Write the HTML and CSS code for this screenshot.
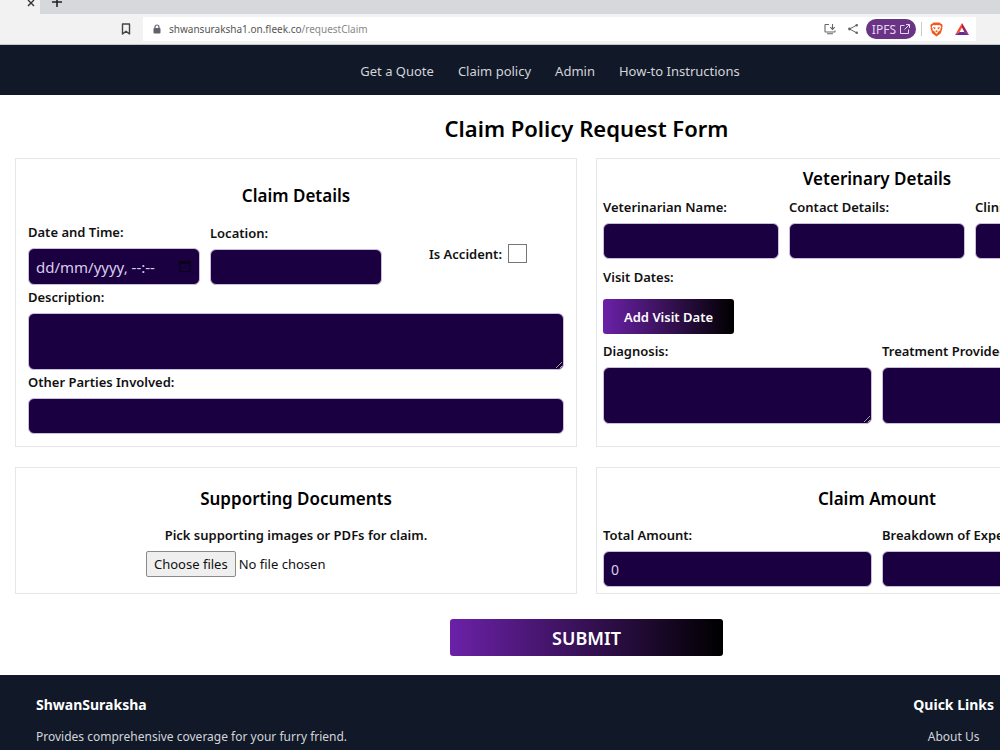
FILE: index.html
```html
<!DOCTYPE html>
<html lang="en">
<head>
    <meta charset="UTF-8">
    <meta name="viewport" content="width=device-width, initial-scale=1.0">
    <title>Claim Policy Request Form</title>
    <link rel="stylesheet" href="styles.css">
</head>
<body>
    <div class="tab-strip">
        <div class="tab">
            <button class="tab-btn" aria-label="Close tab">
                <svg width="8" height="8" viewBox="0 0 8 8"><path d="M1 0l6 6M7 0l-6 6" stroke="#333" stroke-width="1.4"/></svg>
            </button>
        </div>
        <button class="tab-btn new-tab" aria-label="New tab">
            <svg width="10" height="10" viewBox="0 0 10 10"><path d="M5 0v10M0 5h10" stroke="#222" stroke-width="1.6"/></svg>
        </button>
    </div>
    <div class="toolbar">
        <button class="icon-btn bookmark" aria-label="Bookmark">
            <svg width="10" height="12" viewBox="0 0 10 12"><path d="M1.5 1h7v10L5 8.2 1.5 11z" fill="none" stroke="#444" stroke-width="1.4" stroke-linejoin="round"/></svg>
        </button>
        <div class="address">
            <svg width="8" height="10" viewBox="0 0 8 10"><path d="M2 4.5V3a2 2 0 0 1 4 0v1.5" fill="none" stroke="#5f6368" stroke-width="1.2"/><rect x="0.5" y="4" width="7" height="5.5" rx="1" fill="#5f6368"/></svg>
            <span class="url">shwansuraksha1.on.fleek.co<span class="url-path">/requestClaim</span></span>
            <button class="icon-btn" aria-label="Install app">
                <svg width="12" height="12" viewBox="0 0 12 12" fill="none" stroke="#666" stroke-width="1.1"><path d="M5 1.500H1.500a.5.5 0 0 0-.5.5v6.500a.5.5 0 0 0 .5.5h9a.5.5 0 0 0 .5-.5V7.500M3 10.800h6M8.500 1v5M6.300 4.200l2.200 2.200 2.200-2.200"/></svg>
            </button>
            <button class="icon-btn" aria-label="Share">
                <svg width="10" height="12" viewBox="0 0 10 12"><path d="M9 2L1.5 6 9 10" fill="none" stroke="#666"/><circle cx="8.7" cy="2.2" r="1.3" fill="#666"/><circle cx="1.5" cy="6" r="1.4" fill="#666"/><circle cx="8.7" cy="9.8" r="1.3" fill="#666"/></svg>
            </button>
            <button class="ipfs">IPFS
                <svg width="10" height="10" viewBox="0 0 10 10" fill="none" stroke="#e6d6f2"><path d="M4.5 1.5H.5v8h8v-4M6 .5h3.5V4M9.5.5L4.5 5.5"/></svg>
            </button>
            <span class="divider"></span>
            <button class="icon-btn" aria-label="Shields">
                <svg width="13" height="15" viewBox="0 0 13 15"><path d="M3.500.5h6l1.300 1.300 1.200.2.700 2-.5 1.200.2 1-1.500 5L6.500 14.500 2.100 11.200.600 6.200l.2-1L.300 4 1 2l1.200-.2z" fill="#f1591f"/><path d="M3 3l2 .3 1.500-.4 1.500.4 2-.3 1.300 2-1 1.800.2 1.200-1.800 1.200L6.500 12 4.300 9.200 2.500 8l.2-1.200-1-1.800z" fill="#fff"/><path d="M3 5l2.300.6.2 1-1.200.9zM10 5l-2.300.6-.2 1 1.200.9zM5 9l1.500-.8L8 9l-1.500 1.300z" fill="#f1591f"/></svg>
            </button>
            <button class="icon-btn" aria-label="Rewards">
                <svg width="14" height="12" viewBox="0 0 14 12"><path d="M7 0L0 12l4.500-3L7 4.500z" fill="#ff4724"/><path d="M7 0l7 12-4.700-3L7 4.500z" fill="#9e1f63"/><path d="M0 12h14L9.400 9H4.600z" fill="#662d91"/></svg>
            </button>
        </div>
    </div>

    <div class="page">
        <nav class="navbar">
            <a href="#">Get a Quote</a>
            <a href="#">Claim policy</a>
            <a href="#">Admin</a>
            <a href="#">How-to Instructions</a>
        </nav>

        <form class="claim-form">
            <h1>Claim Policy Request Form</h1>
            <div class="sections">
                <section class="card claim-details">
                    <h2>Claim Details</h2>
                    <div class="row">
                        <div class="field">
                            <label for="dateTime">Date and Time:</label>
                            <div class="date-input">
                                <input type="text" id="dateTime" placeholder="dd/mm/yyyy, --:--">
                                <svg class="calendar" width="12" height="12" viewBox="0 0 12 12"><path d="M1 1.5h10v10H1z" fill="none" stroke="#090014" stroke-width="1.2"/><path d="M.5 1h11v3H.5z" fill="#090014"/></svg>
                            </div>
                        </div>
                        <div class="field">
                            <label for="location">Location:</label>
                            <input type="text" id="location">
                        </div>
                        <div class="check-field">
                            <label for="isAccident">Is Accident:</label>
                            <input type="checkbox" id="isAccident">
                        </div>
                    </div>
                    <div class="field">
                        <label for="description">Description:</label>
                        <textarea id="description"></textarea>
                    </div>
                    <div class="field">
                        <label for="otherParties">Other Parties Involved:</label>
                        <input type="text" id="otherParties">
                    </div>
                </section>

                <section class="card vet-details">
                    <h2>Veterinary Details</h2>
                    <div class="row">
                        <div class="field">
                            <label for="vetName">Veterinarian Name:</label>
                            <input type="text" id="vetName">
                        </div>
                        <div class="field">
                            <label for="contact">Contact Details:</label>
                            <input type="text" id="contact">
                        </div>
                        <div class="field">
                            <label for="clinic">Clinic Address:</label>
                            <input type="text" id="clinic">
                        </div>
                    </div>
                    <div class="visit-dates">
                        <label for="addVisit">Visit Dates:</label>
                        <button type="button" class="btn" id="addVisit">Add Visit Date</button>
                    </div>
                    <div class="row">
                        <div class="field">
                            <label for="diagnosis">Diagnosis:</label>
                            <textarea id="diagnosis"></textarea>
                        </div>
                        <div class="field">
                            <label for="treatment">Treatment Provided:</label>
                            <textarea id="treatment"></textarea>
                        </div>
                    </div>
                </section>

                <section class="card documents">
                    <h2>Supporting Documents</h2>
                    <p class="hint">Pick supporting images or PDFs for claim.</p>
                    <div class="file-picker">
                        <input type="file" id="files" class="file-input" multiple>
                        <label for="files" class="file-btn">Choose files</label>
                        <span>No file chosen</span>
                    </div>
                </section>

                <section class="card claim-amount">
                    <h2>Claim Amount</h2>
                    <div class="row">
                        <div class="field">
                            <label for="total">Total Amount:</label>
                            <input type="number" id="total" value="0">
                        </div>
                        <div class="field">
                            <label for="breakdown">Breakdown of Expenses:</label>
                            <input type="text" id="breakdown">
                        </div>
                    </div>
                </section>
            </div>
            <button type="submit" class="btn submit">SUBMIT</button>
        </form>

        <footer class="footer">
            <div class="about">
                <h3>ShwanSuraksha</h3>
                <p>Provides comprehensive coverage for your furry friend.</p>
            </div>
            <div class="quick-links">
                <h3>Quick Links</h3>
                <a href="#">About Us</a>
            </div>
        </footer>
    </div>
</body>
</html>
```
FILE: styles.css
```css
* {
    box-sizing: border-box;
}
body, html {
    margin: 0;
    padding: 0;
    height: 100%;
    font-family: "Noto Sans", sans-serif;
    font-size: 13px;
    line-height: 20px;
    color: #111;
    background: #fff;
    overflow: hidden;
}
h1, h2, h3, p {
    margin: 0;
}
button, input, textarea {
    font-family: inherit;
    font-size: 14px;
}
a {
    text-decoration: none;
}

/* browser bar */
.tab-strip {
    display: flex;
    height: 14px;
    background: #d5d9dc;
}
.tab {
    display: flex;
    justify-content: flex-end;
    width: 40px;
    padding-right: 5px;
    background: #f2f2f2;
}
.tab-btn, .icon-btn {
    display: flex;
    padding: 0;
    border: none;
    background: none;
}
.new-tab {
    padding-left: 12px;
    margin-top: -3px;
}
.toolbar {
    display: flex;
    align-items: center;
    height: 31px;
    padding-right: 24px;
    background: #f2f2f2;
    border-bottom: 1px solid #c5c7cb;
}
.bookmark {
    justify-content: flex-end;
    width: 131px;
    margin-right: 12px;
}
.address {
    display: flex;
    flex: 1;
    align-items: center;
    height: 24px;
    padding: 0 7px 0 10px;
    background: #fff;
}
.url {
    flex: 1;
    margin-left: 8px;
    font-size: 10px;
    color: #555;
}
.url-path {
    color: #888;
}
.address .icon-btn {
    margin-right: 12px;
}
.address .icon-btn:last-child {
    margin-right: 0;
}
.ipfs {
    display: flex;
    align-items: center;
    gap: 4px;
    height: 20px;
    margin-left: -4px;
    padding: 0 6px;
    border: none;
    border-radius: 10px;
    background: #6a3485;
    color: #e6d6f2;
    font-size: 12px;
}
.divider {
    width: 1px;
    height: 14px;
    margin: 0 8px 0 5px;
    background: #ccc;
}

.page {
    min-width: 1173px;
}
.navbar {
    display: flex;
    justify-content: center;
    align-items: center;
    gap: 24px;
    height: 50px;
    padding: 2px 73px 0 0;
    background: #111827;
}
.navbar a {
    color: #d1d5db;
}
.claim-form {
    display: flex;
    flex-direction: column;
    align-items: center;
    padding: 18px 15px 19px;
}
h1 {
    margin-bottom: 15px;
    font-size: 22px;
    font-weight: 600;
    line-height: 30px;
    color: #000;
}
h2 {
    margin-bottom: 12px;
    font-size: 17px;
    font-weight: 600;
    line-height: 28px;
    text-align: center;
    color: #000;
}
.sections {
    display: grid;
    grid-template-columns: 1fr 1fr;
    gap: 20px 19px;
    width: 100%;
}
.card {
    padding: 6px;
    border: 1px solid #e5e7eb;
}
.claim-details {
    padding: 23px 12px 12px;
}
.documents, .claim-amount {
    padding-top: 17px;
}
.vet-details h2 {
    margin-bottom: 4px;
}
.row {
    display: flex;
    align-items: center;
    gap: 10px;
}
.row > * {
    flex: 1;
    min-width: 0;
}
.field {
    display: flex;
    flex-direction: column;
    gap: 6px;
}
.row + .field, .field + .field {
    margin-top: 2px;
}
.row > .field {
    margin-top: 0;
}
label, .hint {
    font-size: 13px;
    font-weight: 600;
}
.field input, textarea {
    display: block;
    width: 100%;
    height: 36px;
    padding: 0 7px;
    border: 1px solid #c9bfdb;
    border-radius: 6px;
    background: #1b0041;
    color: #d9cdec;
}
.field textarea {
    height: 57px;
}
.date-input {
    position: relative;
}
.field .date-input input {
    height: 37px;
    font-size: 15px;
}
.field input::placeholder {
    color: #d9cdec;
    opacity: 1;
}
.calendar {
    position: absolute;
    top: 12px;
    right: 9px;
}
.check-field {
    display: flex;
    justify-content: center;
    align-items: center;
    gap: 6px;
}
.check-field input {
    appearance: none;
    width: 19px;
    height: 19px;
    margin: 0;
    border: 1px solid #767676;
    background: #fff;
}
.visit-dates {
    display: flex;
    flex-direction: column;
    align-items: flex-start;
    gap: 12px;
    margin: 8px 0 7px;
}
.btn {
    height: 35px;
    padding: 0 21px;
    border: none;
    border-radius: 3px;
    background: linear-gradient(to right, #6b21a8, #000);
    color: #fff;
    font-size: 13px;
    font-weight: 600;
    cursor: pointer;
}
.submit {
    width: 273px;
    height: 37px;
    margin-top: 25px;
    font-size: 18px;
}
.hint {
    text-align: center;
}
.file-picker {
    display: flex;
    align-items: center;
    gap: 3px;
    width: 300px;
    margin: 6px auto 0;
}
.file-input {
    position: absolute;
    width: 1px;
    height: 1px;
    opacity: 0;
}
.file-btn {
    padding: 2px 7px;
    border: 1px solid #8a8a8a;
    border-radius: 2px;
    background: #efefef;
    font-weight: 400;
}
.footer {
    display: flex;
    justify-content: space-between;
    min-height: 90px;
    padding: 20px 179px 20px 36px;
    background: #111827;
    color: #d1d5db;
    font-size: 12px;
}
.footer h3 {
    margin-bottom: 12px;
    font-size: 14px;
    font-weight: 700;
    color: #fff;
}
.quick-links {
    text-align: center;
}
.quick-links a {
    color: #d1d5db;
}
```
